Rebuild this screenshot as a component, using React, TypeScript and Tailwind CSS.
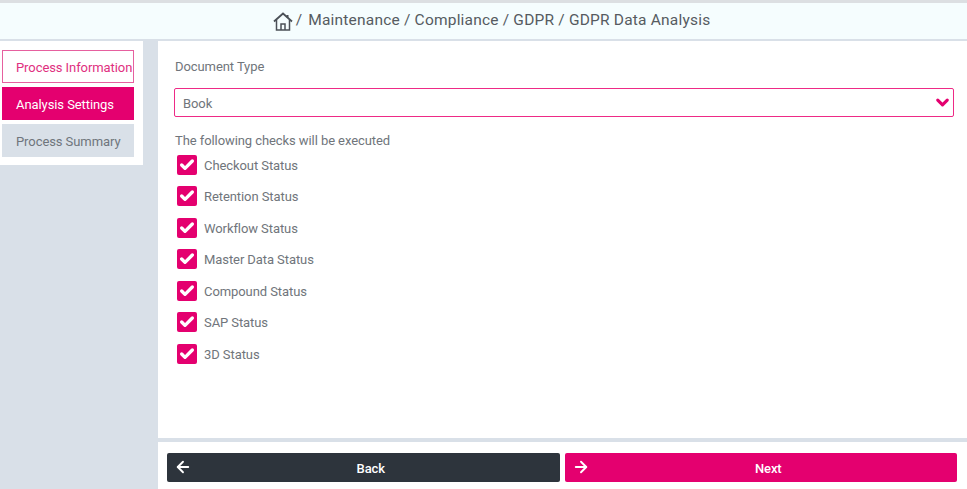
import { ArrowLeft, ArrowRight, ChevronDown, Check } from 'lucide-react';

const checks = [
  'Checkout Status',
  'Retention Status',
  'Workflow Status',
  'Master Data Status',
  'Compound Status',
  'SAP Status',
  '3D Status',
];

const HomeIcon = () => (
  <svg width="20" height="19" viewBox="0 0 20 19" fill="none" stroke="#4b5057" strokeWidth="1.5">
    <path d="M1 9.5 10 1.5l9 8" strokeWidth="1.8" />
    <path d="M3.5 8v10h13V8" />
    <path d="M14.5 3V5.5" strokeWidth="2" />
    <path d="M8 18v-6h4v6" />
  </svg>
);

const App = () => {
  return (
    <div className="h-[489px] w-[967px] overflow-hidden flex flex-col bg-[#d9e0e8] text-[13px] tracking-[-0.08px] text-[#70757b] font-['Roboto',sans-serif]">
      <div className="h-[39px] shrink-0 bg-[#f5fdfe] border-t-[3px] border-[#dcdfe2] pl-[16px] flex items-center justify-center gap-[3px] text-[15.5px] tracking-[0.2px] text-[#565b61]">
        <HomeIcon />
        <span>/</span>
        <span className="ml-[3px]">Maintenance / Compliance / GDPR / GDPR Data Analysis</span>
      </div>

      <div className="flex-1 flex mt-[2px] min-h-0">
        <div className="w-[158px] shrink-0">
          <div className="w-[143px] h-[124px] bg-white pl-[2px] pt-[9px] flex flex-col gap-[4px]">
            <div className="w-[132px] h-[33px] border border-[#e6609f] bg-white text-[#e0307f] pl-[13px] pt-[2px] flex items-center whitespace-nowrap">
              Process Information
            </div>
            <div className="w-[132px] h-[33px] bg-[#e4006f] text-white pl-[14px] pt-[2px] flex items-center">
              Analysis Settings
            </div>
            <div className="w-[132px] h-[33px] bg-[#d9e0e8] text-[#6f757c] pl-[14px] pt-[2px] flex items-center">
              Process Summary
            </div>
          </div>
        </div>

        <div className="flex-1 flex flex-col min-w-0">
          <div className="h-[397px] shrink-0 bg-white pr-[13px] pt-[17px]">
            <div className="pl-[17px] leading-[17px]">Document Type</div>
            <div className="ml-[16px] mt-[13px] h-[29px] border border-[#ee2a86] rounded-[2px] flex items-center justify-between pl-[8px] pr-[1px]">
              <span className="pt-[2px]">Book</span>
              <ChevronDown size={19} strokeWidth={4} className="text-[#e4006f]" />
            </div>
            <div className="pl-[17px] mt-[15px] leading-[17px]">The following checks will be executed</div>
            <div className="flex flex-col gap-[11.5px] mt-[5.5px] pl-[19px]">
              {checks.map((label) => (
                <div key={label} className="flex items-center gap-[7px] h-[20px]">
                  <span className="w-[20px] h-[20px] rounded-[2px] bg-[#e4006f] flex items-center justify-center">
                    <Check size={16} strokeWidth={5} className="text-white" />
                  </span>
                  <span className="pt-[2px]">{label}</span>
                </div>
              ))}
            </div>
          </div>

          <div className="mt-[4px] flex-1 bg-white pl-[9px] pr-[10px] pt-[11px] flex gap-[5px]">
            <button className="relative flex-1 h-[29px] rounded-[2px] bg-[#2d343c] text-white pl-[15px] pt-[2px] flex items-center justify-center font-medium">
              <ArrowLeft size={18} strokeWidth={2.5} className="absolute left-[7px] top-[5px]" />
              Back
            </button>
            <button className="relative flex-1 h-[29px] rounded-[2px] bg-[#e4006f] text-white pl-[15px] pt-[2px] flex items-center justify-center font-medium">
              <ArrowRight size={18} strokeWidth={2.5} className="absolute left-[7px] top-[5px]" />
              Next
            </button>
          </div>
        </div>
      </div>
    </div>
  );
};

export default App;
